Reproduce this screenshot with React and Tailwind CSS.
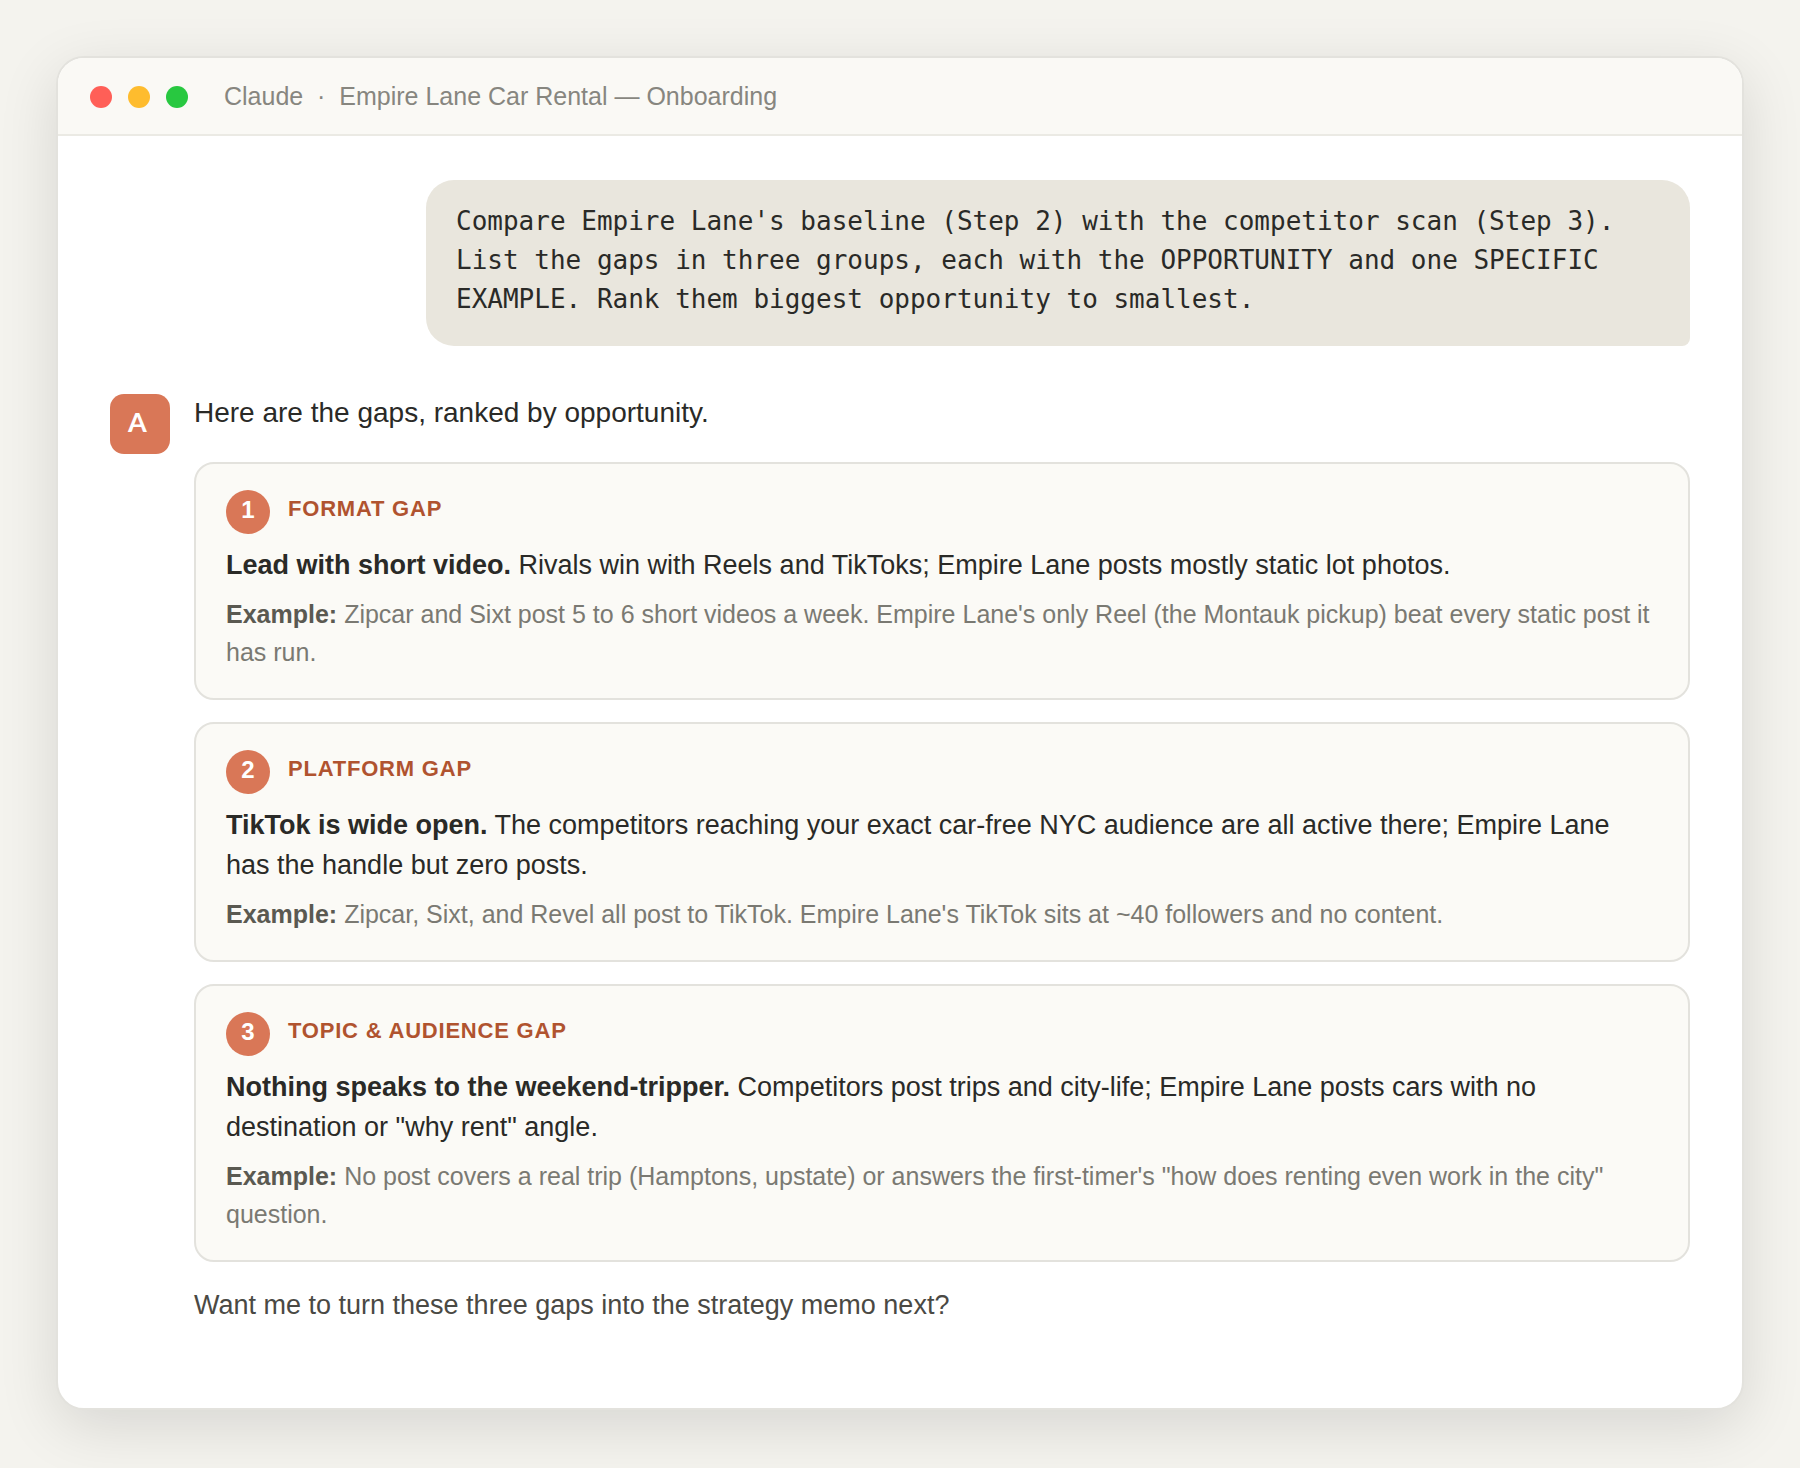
import React from 'react';

const gaps = [
  {
    label: 'Format gap',
    lead: 'Lead with short video.',
    text: 'Rivals win with Reels and TikToks; Empire Lane posts mostly static lot photos.',
    example:
      "Zipcar and Sixt post 5 to 6 short videos a week. Empire Lane's only Reel (the Montauk pickup) beat every static post it has run.",
  },
  {
    label: 'Platform gap',
    lead: 'TikTok is wide open.',
    text: 'The competitors reaching your exact car-free NYC audience are all active there; Empire Lane has the handle but zero posts.',
    example:
      "Zipcar, Sixt, and Revel all post to TikTok. Empire Lane's TikTok sits at ~40 followers and no content.",
  },
  {
    label: 'Topic & audience gap',
    lead: 'Nothing speaks to the weekend-tripper.',
    text: 'Competitors post trips and city-life; Empire Lane posts cars with no destination or "why rent" angle.',
    example:
      'No post covers a real trip (Hamptons, upstate) or answers the first-timer\'s "how does renting even work in the city" question.',
  },
];

const TitleBar = () => (
  <header className="flex items-start gap-9 px-8 pt-7 pb-[26px] bg-[#faf9f5] border-b-2 border-[#ebeae4]">
    <div className="flex gap-4">
      <span className="size-[22px] rounded-full bg-[#ff5f57]" />
      <span className="size-[22px] rounded-full bg-[#febc2e]" />
      <span className="size-[22px] rounded-full bg-[#28c840]" />
    </div>
    <h1 className="text-[25px] leading-5 text-[#87867f] whitespace-pre-wrap">
      {'Claude \u00a0·\u00a0 Empire Lane Car Rental — Onboarding'}
    </h1>
  </header>
);

const GapCard = ({ rank, gap }) => (
  <li className="px-[30px] pt-[26px] pb-[27px] rounded-[20px] border-2 border-[#e3e2dd] bg-[#fbfaf6]">
    <div className="flex gap-[18px]">
      <span className="flex justify-center size-11 rounded-full bg-[#d97757] text-white text-[24px] leading-10 font-bold">
        {rank}
      </span>
      <h2 className="text-[22px] leading-[38px] font-bold uppercase tracking-[0.036em] text-[#b0532f]">{gap.label}</h2>
    </div>
    <p className="mt-[11px] text-[27px] leading-10 text-[#2a2a27]">
      <strong>{gap.lead}</strong> {gap.text}
    </p>
    <p className="mt-[10px] text-[25px] leading-[38px] text-[#7a7972]">
      <strong className="text-[#5a5951]">Example:</strong> {gap.example}
    </p>
  </li>
);

const App = () => (
  <div className="min-h-screen p-14 bg-[#f4f3ee] font-['Liberation_Sans',Arial,sans-serif]">
    <main className="overflow-hidden rounded-[28px] border-2 border-[#e3e2dd] bg-white shadow-[0_16px_60px_rgba(0,0,0,0.12)]">
      <TitleBar />
      <div className="px-[52px] pt-11 pb-[84px]">
        {/* User prompt */}
        <div className="w-4/5 ml-auto px-[30px] pt-[22px] pb-[27px] rounded-[28px] rounded-br-lg bg-[#e9e6dd] text-[#2a2a27]">
          <p className="font-['DejaVu_Sans_Mono',monospace] text-[26px] leading-[39px]">
            Compare Empire Lane's baseline (Step 2) with the competitor scan (Step 3). List the gaps in three groups,
            each with the OPPORTUNITY and one SPECIFIC EXAMPLE. Rank them biggest opportunity to smallest.
          </p>
        </div>

        {/* Reply */}
        <div className="flex items-start gap-6 mt-12">
          <div className="size-[60px] shrink-0 pl-[18px] rounded-[14px] bg-[#d97757] text-white font-['Lato',sans-serif] text-[27px] leading-[56px] font-bold">
            A
          </div>
          <div className="flex-1">
            <p className="text-[28px] leading-[38px] text-[#2a2a27]">Here are the gaps, ranked by opportunity.</p>
            <ol className="flex flex-col gap-[22px] mt-[30px]">
              {gaps.map((gap, i) => (
                <GapCard key={gap.label} rank={i + 1} gap={gap} />
              ))}
            </ol>
            <p className="mt-6 text-[27px] leading-[38px] text-[#4a4944]">
              Want me to turn these three gaps into the strategy memo next?
            </p>
          </div>
        </div>
      </div>
    </main>
  </div>
);

export default App;
